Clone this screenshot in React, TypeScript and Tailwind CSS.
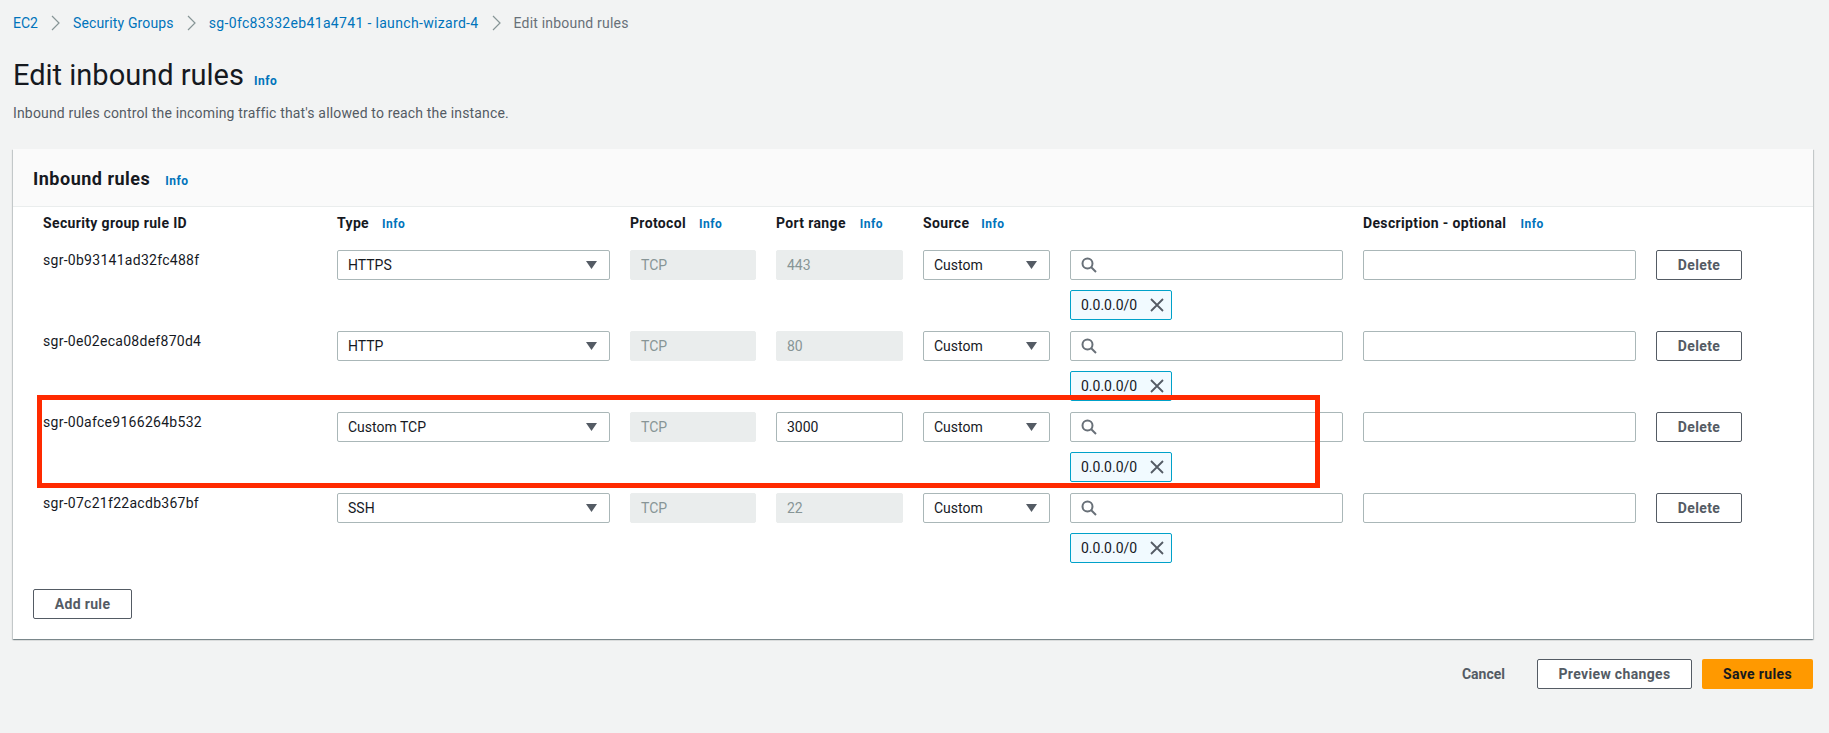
const font = "[font-family:Roboto,'Noto_Sans',sans-serif]";

const rules = [
  { id: "sgr-0b93141ad32fc488f", type: "HTTPS", port: "443", editable: false },
  { id: "sgr-0e02eca08def870d4", type: "HTTP", port: "80", editable: false },
  { id: "sgr-00afce9166264b532", type: "Custom TCP", port: "3000", editable: true },
  { id: "sgr-07c21f22acdb367bf", type: "SSH", port: "22", editable: false },
];

function Info({ className = "" }: { className?: string }) {
  return <a className={`text-[12px] leading-4 font-bold tracking-[0.5px] text-[#0073bb] ${className}`}>Info</a>;
}

function Chevron() {
  return (
    <svg width="9" height="16" viewBox="0 0 9 16" fill="none" className="shrink-0">
      <path d="M1 1l7 7-7 7" stroke="#879596" strokeWidth="1.2" />
    </svg>
  );
}

function Caret() {
  return (
    <svg width="11" height="8" viewBox="0 0 11 8" className="shrink-0">
      <path d="M0 0h11L5.5 8z" fill="#545b64" />
    </svg>
  );
}

function SearchIcon() {
  return (
    <svg width="16" height="16" viewBox="0 0 16 16" fill="none" className="shrink-0">
      <circle cx="6.5" cy="6.5" r="5" stroke="#687078" strokeWidth="2" />
      <path d="M10 10l5 5" stroke="#687078" strokeWidth="2" />
    </svg>
  );
}

function CloseIcon() {
  return (
    <svg width="14" height="14" viewBox="0 0 14 14" fill="none" className="shrink-0">
      <path d="M1 1l12 12M13 1L1 13" stroke="#545b64" strokeWidth="1.8" />
    </svg>
  );
}

function Select({ label }: { label: string }) {
  return (
    <div className="flex h-[30px] items-center justify-between rounded-[2px] border border-[#aab7b8] bg-white pl-[10px] pr-[12px] text-sm text-[#16191f]">
      <span>{label}</span>
      <Caret />
    </div>
  );
}

function Field({ value, disabled }: { value?: string; disabled?: boolean }) {
  return (
    <div
      className={`flex h-[30px] items-center rounded-[2px] border px-[10px] text-sm ${
        disabled ? "border-[#eaeded] bg-[#eaeded] text-[#879596]" : "border-[#aab7b8] bg-white text-[#16191f]"
      }`}
    >
      {value}
    </div>
  );
}

function Button({ children, className = "" }: { children: React.ReactNode; className?: string }) {
  return (
    <button
      className={`flex h-[30px] items-center justify-center rounded-[2px] border border-[#545b64] bg-white text-sm font-bold tracking-[0.35px] text-[#545b64] ${className}`}
    >
      {children}
    </button>
  );
}

function Rule({ rule }: { rule: (typeof rules)[number] }) {
  return (
    <>
      <div className="text-sm leading-5 tracking-[0.28px] text-[#16191f]">{rule.id}</div>
      <Select label={rule.type} />
      <Field value="TCP" disabled />
      <Field value={rule.port} disabled={!rule.editable} />
      <Select label="Custom" />
      <div className="flex flex-col gap-[10px]">
        <div className="flex h-[30px] items-center rounded-[2px] border border-[#aab7b8] bg-white pl-[10px]">
          <SearchIcon />
        </div>
        <div className="flex h-[30px] w-[102px] items-center justify-between rounded-[2px] border border-[#00a1c9] bg-[#f1faff] pl-[10px] pr-[7px] text-sm text-[#16191f]">
          <span>0.0.0.0/0</span>
          <CloseIcon />
        </div>
      </div>
      <Field />
      <Button>Delete</Button>
    </>
  );
}

function ColumnHead({ label, gap = "gap-[14px]" }: { label: string; gap?: string }) {
  return (
    <div className={`flex h-5 items-center text-sm font-bold tracking-[0.35px] whitespace-nowrap text-[#16191f] ${gap}`}>
      {label} <Info className="mt-0.5" />
    </div>
  );
}

export default function App() {
  return (
    <div className={`relative min-h-screen bg-[#f2f3f3] pl-[13px] pr-4 pt-[13px] ${font}`}>
      <nav className="flex h-5 items-center gap-[13px] text-sm">
        <a className="text-[#0073bb]">EC2</a>
        <Chevron />
        <a className="tracking-[0.15px] text-[#0073bb]">Security Groups</a>
        <Chevron />
        <a className="tracking-[0.33px] text-[#0073bb]">sg-0fc83332eb41a4741 - launch-wizard-4</a>
        <Chevron />
        <span className="tracking-[0.2px] text-[#687078]">Edit inbound rules</span>
      </nav>

      <div className="mt-[24px] flex h-9 items-center gap-[10px]">
        <h1 className="text-[29px] leading-9 font-normal text-[#16191f]">Edit inbound rules</h1>
        <Info className="mt-3" />
      </div>
      <p className="mt-[10px] text-sm leading-5 tracking-[0.16px] text-[#545b64]">
        Inbound rules control the incoming traffic that's allowed to reach the instance.
      </p>

      <section className="mt-[26px] w-[1800px] bg-white shadow-[0_1px_1px_0_rgba(0,28,36,0.3),1px_1px_1px_0_rgba(0,28,36,0.15),-1px_1px_1px_0_rgba(0,28,36,0.15)]">
        <header className="flex h-[58px] items-center gap-[15px] border-b border-[#eaeded] bg-[#fafafa] pl-[20px]">
          <h2 className="mt-0.5 text-lg font-bold tracking-[0.5px] text-[#16191f]">Inbound rules</h2>
          <Info className="mt-1.5" />
        </header>

        <div className="px-[30px] pt-[6px]">
          <div className="grid grid-cols-[274px_273px_126px_127px_127px_273px_273px_86px] gap-x-5 gap-y-[11px]">
            <div className="h-[26px] text-sm leading-5 font-bold tracking-[0.35px] text-[#16191f]">Security group rule ID</div>
            <ColumnHead label="Type" gap="gap-[13px]" />
            <ColumnHead label="Protocol" gap="gap-[13px]" />
            <ColumnHead label="Port range" />
            <ColumnHead label="Source" gap="gap-3" />
            <div />
            <ColumnHead label="Description - optional" />
            <div />
            {rules.map((rule) => (
              <Rule key={rule.id} rule={rule} />
            ))}
          </div>
        </div>

        <div className="pb-5 pl-5 pt-[26px]">
          <Button className="w-[99px] tracking-[0.6px]">Add rule</Button>
        </div>
      </section>

      <div className="mt-5 flex w-[1800px] items-center justify-end">
        <a className="mr-8 text-sm font-bold text-[#545b64]">Cancel</a>
        <Button className="mr-[10px] w-[155px]">Preview changes</Button>
        <button className="h-[30px] w-[111px] rounded-[2px] bg-[#ff9900] text-sm font-bold tracking-[0.35px] text-[#16191f]">Save rules</button>
      </div>

      <div className="absolute left-[37px] top-[395px] h-[93px] w-[1283px] border-[5px] border-[#ff2a00]" />
    </div>
  );
}
